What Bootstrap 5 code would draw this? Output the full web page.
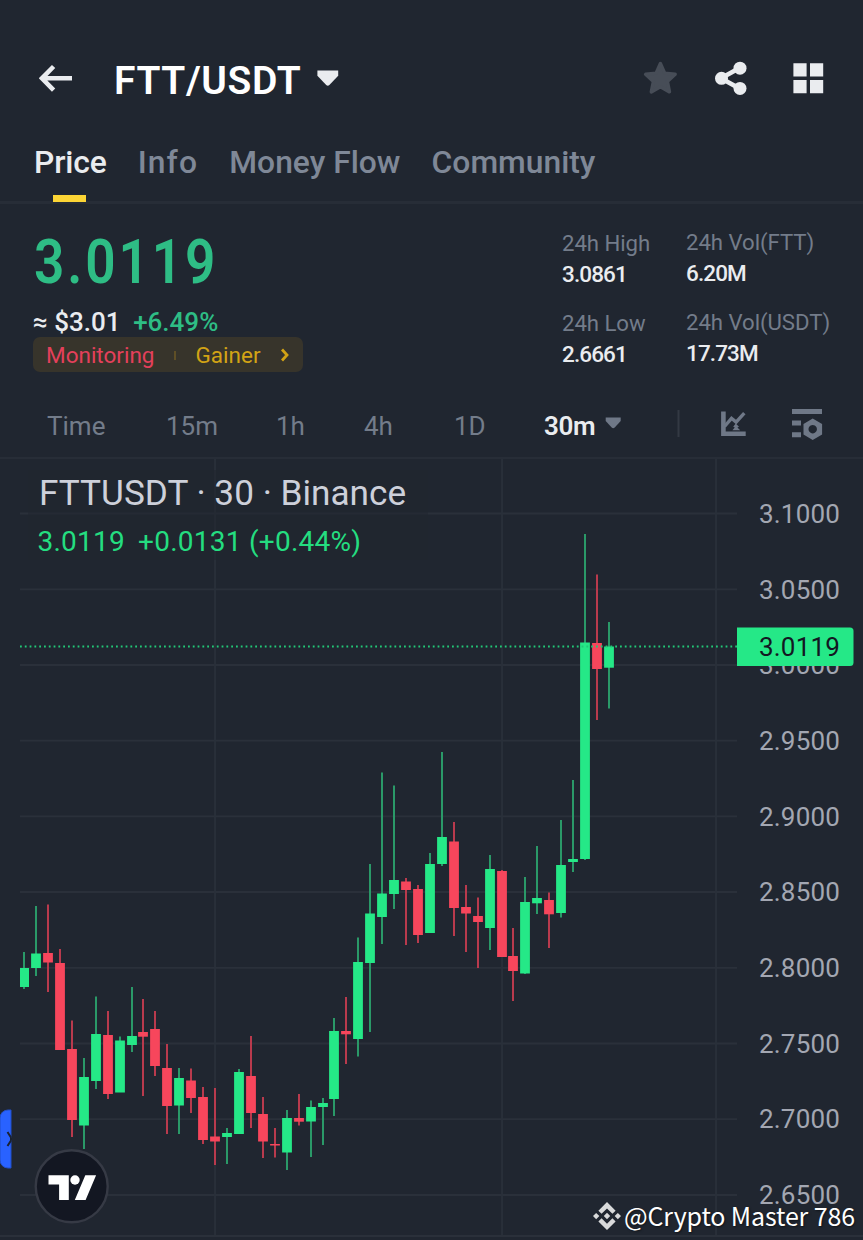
<!DOCTYPE html>
<html lang="en">
<head>
<meta charset="utf-8">
<meta name="viewport" content="width=device-width, initial-scale=1">
<title>FTT/USDT</title>
<link rel="stylesheet" href="https://cdn.jsdelivr.net/npm/bootstrap@5.3.0/dist/css/bootstrap.min.css">
<style>
  body { background:#202630; font-family:Roboto,"Liberation Sans",sans-serif; color:#eaecef; width:863px; height:1240px; overflow:hidden; line-height:1; }
  svg { display:block; flex:none; }
  .topbar { height:126px; padding:30px 39px 0 39px; }
  .pair { font-size:39px; font-weight:600; letter-spacing:.6px; line-height:54px; margin-left:41px; color:#fff; }
  .tabs { height:78px; border-bottom:3px solid #272d37; padding-left:34px; gap:31.2px; }
  .tab-item { position:relative; font-size:31.8px; font-weight:500; line-height:73px; color:#7f8897; height:75px; white-space:nowrap; }
  .tab-item.on { color:#eaecef; letter-spacing:-.15px; }
  .tab-item.on::after { content:""; position:absolute; left:19px; bottom:-1px; width:33px; height:7px; background:#fcd535; }
  .summary { height:183px; padding:0 33px; }
  .last { font-size:61.5px; font-weight:600; line-height:62px; margin:27px 0 0 1.3px; color:#2ebd85; transform:scaleX(.865); transform-origin:0 0; letter-spacing:3.3px; white-space:nowrap; }
  .sub { font-size:26px; font-weight:500; line-height:30px; margin-top:14px; gap:12.5px; white-space:nowrap; }
  .up { color:#2ebd85; }
  .tagbox { width:270px; height:35px; padding:1px 14px 0 13px; border-radius:7px; background:#37342b; font-size:22.5px; }
  .tag-sep { width:2px; height:9px; background:#5f4f26; margin:0 20px 0 19px; }
  .stat { font-size:22.2px; line-height:26px; white-space:nowrap; }
  .stat .k { color:#737c8a; letter-spacing:-.05px; }
  .stat .v { font-size:22.5px; font-weight:500; letter-spacing:-.9px; margin-top:5px; color:#eaecef; }
  .frames { height:72px; border-bottom:2px solid #272d37; font-size:26px; color:#737c8a; padding-left:47px; }
  .frames span { line-height:78px; height:70px; white-space:nowrap; }
  .chart { position:relative; height:781px; }
  .legend { position:absolute; left:38px; top:16px; white-space:nowrap; color:#cdd0da; }
  .legend .sym { font-size:35.2px; line-height:36px; margin-left:1px; }
  .legend .val { font-size:28px; line-height:32px; margin-top:15px; color:#24dd80; gap:13px; letter-spacing:.25px; margin-left:-.5px; }
  .stamp { position:absolute; left:593px; top:739px; gap:3px; color:#fff; font:400 25px/34px "Noto Sans CJK SC",sans-serif; white-space:nowrap; letter-spacing:-.13px; text-shadow:1px 1px 2px rgba(0,0,0,.5); }
  .stamp svg { margin-top:2px; }
</style>
</head>
<body>
<header class="topbar d-flex align-items-start">
  <svg class="mt-4" width="34" height="48" viewBox="39 54 34 48" fill="none" stroke="#eaecef" stroke-width="4.6"><path d="M72 78.3H42.5M53.6 66.5 42 78.3l11.6 11.8"/></svg>
  <div class="pair pt-4">FTT/USDT</div>
  <svg class="mt-4" style="margin-left:16px" width="22" height="48" viewBox="317 54 22 48"><path d="M317.4 70.5h20.8v5.2L329.4 85q-1.6 1.6-3.2 0l-8.8-9.3z" fill="#eaecef"/></svg>
  <svg class="mt-4 ms-auto" width="181" height="48" viewBox="643 54 181 48">
    <path d="M660.4 63.5l4.3 9.600 10.500 1.200-7.800 7.100 2.100 10.500-9.100-5.200-9.100 5.200 2.100-10.500-7.800-7.100 10.500-1.200z" fill="#474d57" stroke="#474d57" stroke-width="3.4" stroke-linejoin="round"/>
    <g fill="#eaecef"><path d="M739.5 68 721 78.3l18.5 10.2" fill="none" stroke="#eaecef" stroke-width="4.6"/><circle cx="721.5" cy="78.3" r="6.5"/><circle cx="740" cy="68.2" r="6.5"/><circle cx="740" cy="88.4" r="6.5"/>
    <path d="M793.4 63.3h13.2v13.2h-13.2zM810 63.3h13.2v13.2H810zM793.4 80h13.2v13.2h-13.2zM810 80h13.2v13.2H810z"/></g>
  </svg>
</header>
<nav class="tabs d-flex">
  <div class="tab-item on">Price</div><div class="tab-item" style="letter-spacing:1.1px">Info</div><div class="tab-item">Money Flow</div><div class="tab-item">Community</div>
</nav>
<section class="summary d-flex">
  <div class="flex-grow-1">
    <div class="last">3.0119</div>
    <div class="sub d-flex"><span>≈ $3.01</span><span class="up">+6.49%</span></div>
    <div class="tagbox d-flex align-items-center">
      <span style="color:#e4405b">Monitoring</span><i class="tag-sep"></i><span style="color:#d2a315">Gainer</span>
      <svg class="ms-auto" width="8" height="14" viewBox="0 0 8 14" fill="none" stroke="#d2a315" stroke-width="2.8"><path d="M1 1.500 6 7l-5 5.500"/></svg>
    </div>
  </div>
  <div class="d-flex flex-column" style="width:124px;padding-top:26px;gap:23px">
    <div class="stat"><div class="k">24h High</div><div class="v">3.0861</div></div>
    <div class="stat"><div class="k">24h Low</div><div class="v">2.6661</div></div>
  </div>
  <div class="d-flex flex-column" style="width:144px;padding-top:25px;gap:23px">
    <div class="stat"><div class="k">24h Vol(FTT)</div><div class="v">6.20M</div></div>
    <div class="stat"><div class="k">24h Vol(USDT)</div><div class="v">17.73M</div></div>
  </div>
</section>
<section class="frames d-flex">
  <span style="width:119px">Time</span><span style="width:110px">15m</span><span style="width:88px">1h</span><span style="width:90px">4h</span><span style="width:90px">1D</span><span style="color:#eaecef;font-weight:600;letter-spacing:-.3px">30m</span>
  <svg class="ms-auto" width="263" height="70" viewBox="600 387 263 70">
    <path d="M605.7 417.5h15v3.5l-6 6.6q-1.5 1.5-3 0l-6-6.600z" fill="#6f7887"/>
    <path d="M678.5 410v27" stroke="#333943" stroke-width="2"/>
    <g fill="none" stroke="#6f7887"><path d="M723.4 411.5v22.2h22.3" stroke-width="4.6"/><path d="M724.5 426.500l7-8.200 4.600 3.800 8.200-9" stroke-width="3.4"/></g>
    <path d="M735.7 423.400l3.300 3.400-1.600.8 2.800 2.600h-7.800l2.400-2.600-1.600-.8z" fill="#6f7887"/>
    <path d="M792 409h30v5h-30zM792 420.5h9v5h-9zM792 432.3h9v5h-9z" fill="#6f7887"/>
    <path fill-rule="evenodd" d="M812.7 418.5l9.400 5.400v10.600l-9.400 5.500-9.200-5.500v-10.600zM812.7 425a4.2 4.2 0 1 0 .01 0z" fill="#6f7887"/>
  </svg>
</section>
<main class="chart">
  <svg id="plot" width="863" height="781" viewBox="0 459 863 781" font-family="Roboto,sans-serif" font-size="26"></svg>
  <div class="legend">
    <div class="sym">FTTUSDT · 30 · Binance</div>
    <div class="val d-flex"><span>3.0119</span><span>+0.0131 (+0.44%)</span></div>
  </div>
  <div class="stamp d-flex">
    <svg width="28" height="32" viewBox="0 0 126.6 144"><path fill="#d9dadb" transform="translate(0 9)" d="M38.7 53.2 63.3 28.6l24.6 24.6 14.3-14.3L63.3 0 24.4 38.9zM0 63.3 14.3 49l14.3 14.3-14.3 14.3zM38.7 73.4 63.3 98l24.6-24.6 14.3 14.3-38.9 38.9-38.9-38.9zM98 63.3 112.3 49l14.3 14.3-14.3 14.3zM77.8 63.3 63.3 48.8 48.8 63.3l14.5 14.5z"/></svg>
    <span>@Crypto Master 786</span>
  </div>
</main>
<script>
// candle: x, wick top, wick bottom, body top, body bottom, rising
const candles = [
[24,952,989,968,987,1],[36,906,976,953.5,968,1],[48,904.5,992,953,962.5,0],[60,949,1050,963,1050,0],[72,1020.5,1137,1049,1120,0],[84,1058,1149,1077,1125.5,1],
[96,996.5,1089,1034,1081,1],[108,1011,1099,1035,1094,0],[120,1036.5,1092,1040.5,1092.5,1],[132,987,1052,1036,1045,1],[143,999,1096,1032,1036.7,0],[155,1011,1076,1029,1066,0],
[167,1044,1134,1068,1106,0],[179,1068,1134,1078,1105.5,1],[191,1068.5,1113,1080.5,1098,0],[203,1087,1144,1097,1140,0],[215,1088,1165,1136.5,1141.5,0],[227,1128,1164,1133,1137,1],
[239,1069,1134,1072,1134,1],[251,1036,1128,1076,1113,0],[263,1097,1158,1114,1141.5,0],[275,1128,1157.5,1144,1145.5,0],[287,1110,1170,1118,1152.5,1],[299,1094,1125.5,1118,1121.7,0],
[311,1100.5,1157,1107,1121.5,1],[323,1098,1145,1103,1107,1],[334,1018,1116,1031,1099,1],[346,997,1064,1031,1034.3,0],[358,937.5,1056.5,962,1039,1],[370,864,1032,913.5,963,1],
[382,772.5,944,893.5,917,1],[394,785.5,909,880,894,1],[406,878,945,881.5,890,0],[418,885,943,889,935,0],[430,853,933,864,933,1],[442,752,866,837,864,1],
[454,822,936,841.5,908,0],[466,885,952,907,913.5,0],[478,897.5,968,916,922,0],[490,855,950,869,928,1],[502,870,957,871,957,0],[513,928,1001,956,971,0],
[525,877,974,902,973.5,1],[537,846,914,898,903.3,1],[549,892.5,948,900,914.3,0],[561,820,917.5,865,913,1],[573,780,872,859,862,1],[585,534,860,642.5,859,1],[597,574.5,720,643,669,0],[609,622,708.5,646.5,667.7,1]];
const rows = [513.5,589.3,665,740.7,816.3,892,967.8,1043.5,1119.1,1195];
let s = '';
const line = (x1,y1,x2,y2,c,w,x='') => s += `<path d="M${x1} ${y1}L${x2} ${y2}" stroke="${c}" stroke-width="${w}" ${x}/>`;
rows.forEach(y => line(20,y,737,y,'#2a303a',1.8));
[215,502,716].forEach(x => line(x,459,x,1235,'#2a303a',1.8));
line(0,1236,863,1236,'#2a303a',2);
s += '<rect x="28" y="470" width="400" height="90" fill="#202630" opacity=".55"/>';
for (const [x,h,l,t,b,up] of candles) {
  line(x,h,x,l,up ? '#2a9968' : '#b93a4d',2);
  s += `<rect x="${x-(x==24?4:4.9)}" y="${t}" width="${x==24?9:9.8}" height="${b-t}" fill="${up ? '#25e887' : '#f7465c'}"/>`;
}
line(20,646.5,737,646.5,'#22c777',1.8,'stroke-dasharray="1.8 3"');
rows.forEach((y,i) => s += `<text x="759" y="${y+9.3}" fill="#a3a7b2" letter-spacing=".2">${(3.1-i*.05).toFixed(4)}</text>`);
s += `<path d="M737 627.5h113a3.5 3.5 0 0 1 3.5 3.5v31.5a3.5 3.5 0 0 1-3.5 3.5H737z" fill="#25e887"/><text x="759" y="656" fill="#131722" letter-spacing=".2">3.0119</text>
<path d="M11 1110H8a8 8 0 0 0-8 8v42a8 8 0 0 0 8 8h3z" fill="#2962ff" stroke="#214fc9" stroke-width="1"/><path d="M7.5 1132l3.5 5.5M11 1140.5l-3.5 5.5M11 1137.5v3" stroke="#1b2230" stroke-width="2" fill="none"/>
<circle cx="71.7" cy="1186.3" r="36" fill="#131722" stroke="#363a45" stroke-width="2.4"/>
<g fill="#fff"><path d="M48.5 1175.3h20.3V1200h-9.7v-15.5H48.5zM85.3 1175.3h10.8L85.6 1200H74.8z"/><circle cx="75" cy="1180" r="4.7"/></g>`;
document.getElementById('plot').innerHTML = s;
</script>
<script src="https://cdn.jsdelivr.net/npm/bootstrap@5.3.0/dist/js/bootstrap.bundle.min.js"></script>
</body>
</html>
